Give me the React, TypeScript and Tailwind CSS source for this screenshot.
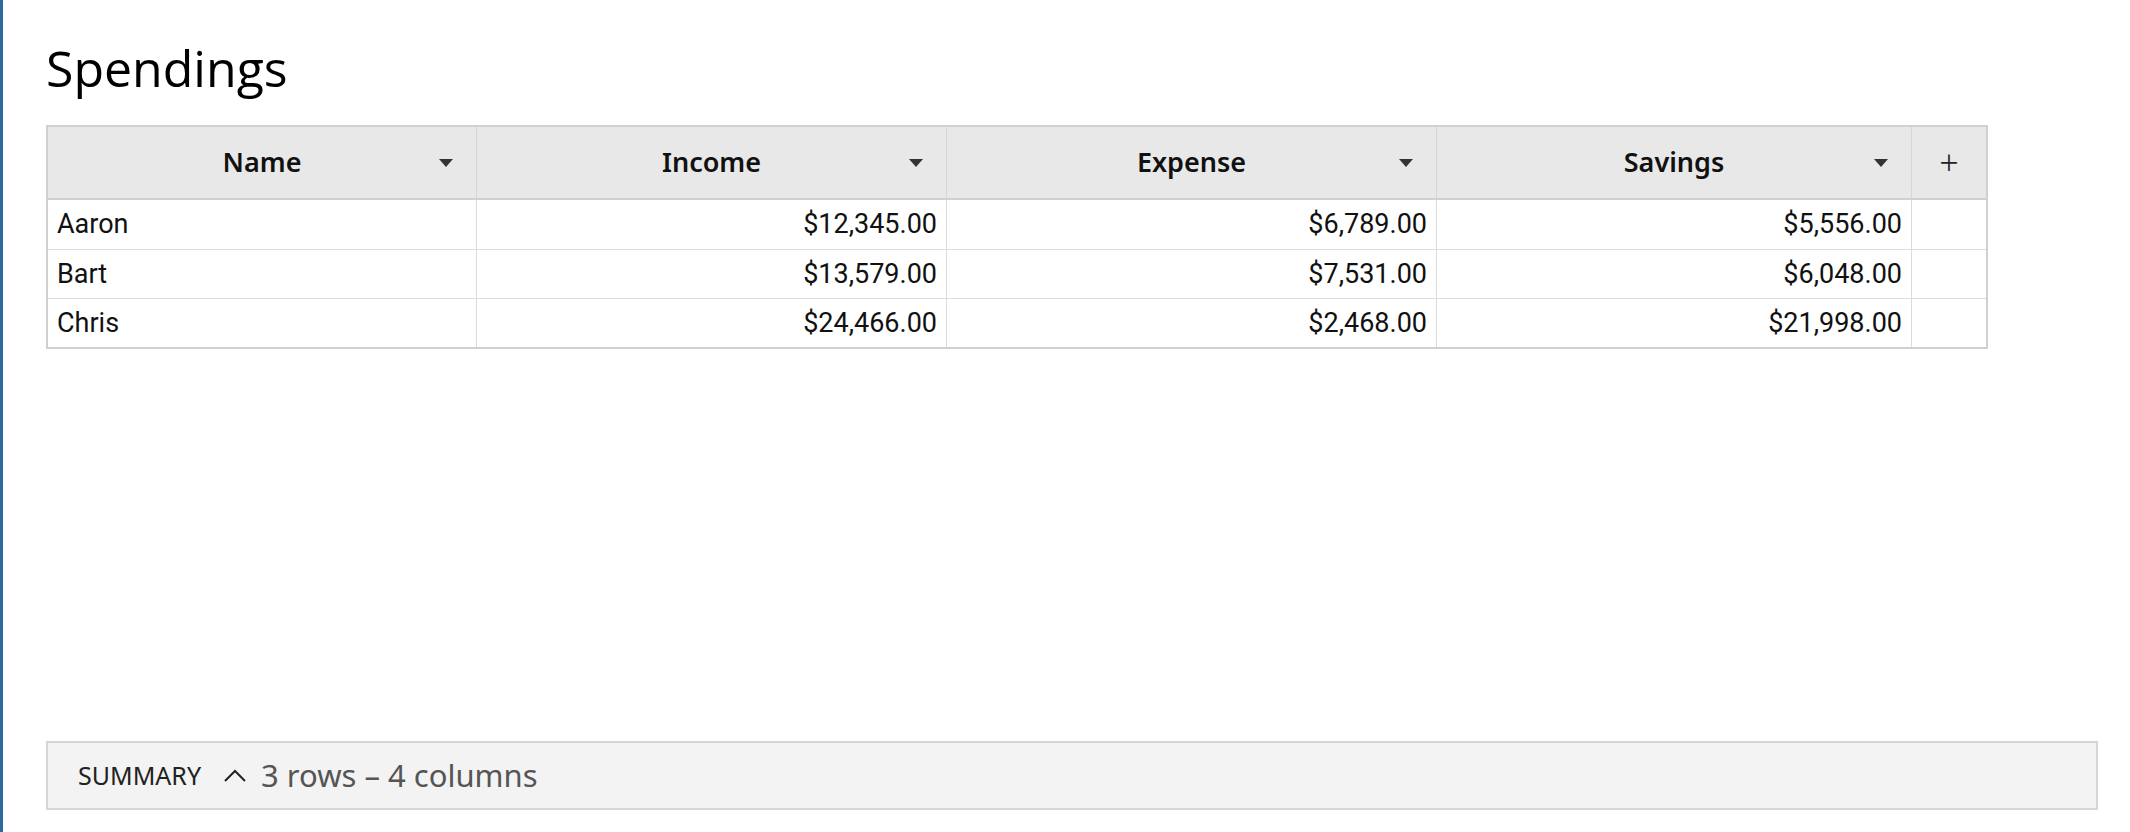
const cols = [
  { title: "Name", w: 428 },
  { title: "Income", w: 470 },
  { title: "Expense", w: 490 },
  { title: "Savings", w: 475 },
];

const rows = [
  ["Aaron", "$12,345.00", "$6,789.00", "$5,556.00"],
  ["Bart", "$13,579.00", "$7,531.00", "$6,048.00"],
  ["Chris", "$24,466.00", "$2,468.00", "$21,998.00"],
];

const Caret = () => (
  <svg width="16" height="10" viewBox="0 0 16 10" className="absolute right-[22px] top-1/2 -translate-y-1/2">
    <path d="M1 1h14L8 9z" fill="#333" />
  </svg>
);

export default function App() {
  return (
    <div className="flex h-[832px] w-[2130px] bg-white">
      <div className="w-[3px] bg-[#2d6a9f]" />
      <div className="flex flex-1 flex-col pl-[43px] pr-[32px]">
        <h1 className="mt-[38px] text-[50px] leading-[60px] text-black" style={{ fontFamily: '"Open Sans", "Noto Sans", sans-serif' }}>
          Spendings
        </h1>
        <div className="mt-[27px] w-fit border-2 border-[#d0d0d0]">
          <div className="flex h-[73px] bg-[#e8e8e8] border-b-2 border-[#d0d0d0]" style={{ fontFamily: '"Noto Sans", sans-serif' }}>
            {cols.map((c, i) => (
              <div
                key={c.title}
                style={{ width: c.w }}
                className={`relative flex items-center justify-center text-[27px] font-semibold text-[#111] ${i > 0 ? "border-l border-[#d6d6d6]" : ""}`}
              >
                {c.title}
                <Caret />
              </div>
            ))}
            <div className="flex w-[75px] items-center justify-center border-l border-[#d6d6d6] text-[34px] font-light text-[#222]">+</div>
          </div>
          {rows.map((r, ri) => (
            <div key={ri} className={`flex h-[49px] ${ri > 0 ? "border-t border-[#dcdcdc]" : ""}`} style={{ fontFamily: "Roboto, sans-serif" }}>
              {r.map((v, i) => (
                <div
                  key={i}
                  style={{ width: cols[i].w }}
                  className={`flex items-center px-[9px] text-[27px] text-[#111] ${i === 0 ? "justify-start" : "justify-end border-l border-[#dcdcdc]"}`}
                >
                  {v}
                </div>
              ))}
              <div className="w-[75px] border-l border-[#dcdcdc]" />
            </div>
          ))}
        </div>
        <div className="flex-1" />
        <div className="mb-[22px] flex h-[69px] items-center border-2 border-[#d6d6d6] bg-[#f3f3f3] pl-[30px]" style={{ fontFamily: '"Noto Sans", sans-serif' }}>
          <span className="text-[25px] text-[#222]">SUMMARY</span>
          <svg width="24" height="14" viewBox="0 0 24 14" className="ml-[22px]">
            <path d="M2 12L12 2l10 10" fill="none" stroke="#222" strokeWidth="2" />
          </svg>
          <span className="ml-[14px] text-[31px] text-[#555]">3 rows – 4 columns</span>
        </div>
      </div>
    </div>
  );
}
